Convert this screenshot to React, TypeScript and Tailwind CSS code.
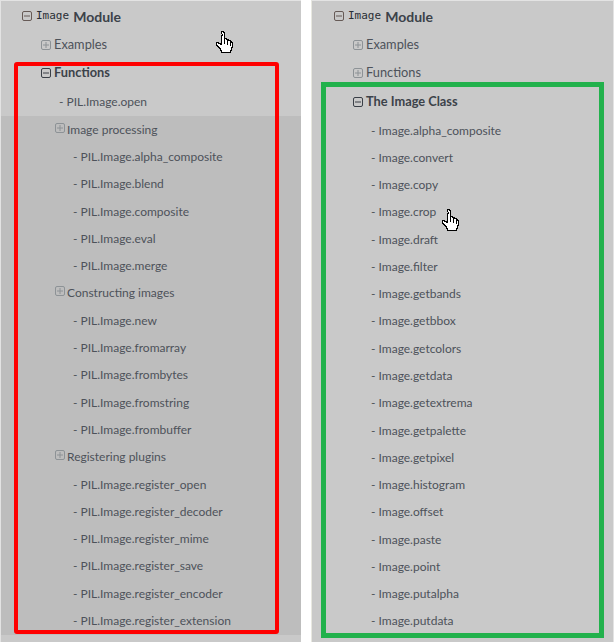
function Box({ kind, tone, raised }: { kind: "plus" | "minus"; tone: "dark" | "light" | "orange"; raised?: boolean }) {
  const c = tone === "dark" ? "#3a3f47" : tone === "orange" ? "#665a56" : "#8d9296";
  return (
    <svg width="10" height="10" viewBox="0 0 10 10" className={raised ? "shrink-0 -mt-[4px]" : "shrink-0"}>
      <rect x="0.5" y="0.5" width="9" height="9" rx="1.5" fill="none" stroke={c} />
      <path d="M2 5H8" stroke={c} />
      {kind === "plus" && <path d="M5 2V8" stroke={c} />}
    </svg>
  );
}

function Hand({ className }: { className: string }) {
  return (
    <svg width="18" height="22" viewBox="0 0 18 22" className={className} shapeRendering="crispEdges">
      <path
        d="M5.5.5h2v1h1v6h2v1h2v1h2v1h1v1h1v5h-1v3h-1v2h-9v-2h-1v-2h-1v-1h-1v-1h-1v-1h-1v-3h2v1h2v1h1v-9h1z"
        fill="#fff"
        stroke="#000"
      />
      <path d="M8.5 8v5M11.5 9v5M14.5 11v4" stroke="#000" fill="none" />
    </svg>
  );
}

type Row = { t: string; h: number; ml: number; b?: "plus" | "minus"; bold?: boolean; open?: boolean; small?: boolean; raised?: boolean };

function R({ r }: { r: Row }) {
  return (
    <div className="flex items-center" style={{ height: r.h, paddingLeft: r.ml }}>
      {r.b && (
        <span className={r.raised ? "mr-[2px] flex" : "mr-[3px] flex"}>
          <Box kind={r.b} tone={r.open ? "dark" : "light"} raised={r.raised} />
        </span>
      )}
      <span className={r.bold ? "font-bold text-[#3c424a]" : r.small ? "text-[12px] text-[#4d525a]" : "text-[#4d525a]"}>{r.t}</span>
    </div>
  );
}

function Title() {
  return (
    <div className="flex h-[28px] items-center">
      <span className="mr-[4px] flex">
        <Box kind="minus" tone="orange" />
      </span>
      <span className="text-[11px] text-[#2a2f36] [font-family:'DejaVu_Sans_Mono',monospace]">Image</span>
      <span className="ml-[4px] text-[14px] font-bold text-[#3c424a]">Module</span>
    </div>
  );
}

const leaf = (t: string): Row => ({ t, h: 27.3, ml: 72, small: true });
const group = (t: string): Row => ({ t, h: 27.3, ml: 54, b: "plus", small: true, raised: true });

const leftLower: Row[] = [
  group("Image processing"),
  ...["alpha_composite", "blend", "composite", "eval", "merge"].map((s) => leaf(`- PIL.Image.${s}`)),
  group("Constructing images"),
  ...["new", "fromarray", "frombytes", "fromstring", "frombuffer"].map((s) => leaf(`- PIL.Image.${s}`)),
  group("Registering plugins"),
  ...["register_open", "register_decoder", "register_mime", "register_save", "register_encoder", "register_extension"].map((s) =>
    leaf(`- PIL.Image.${s}`)
  ),
];

const methods = [
  "alpha_composite", "convert", "copy", "crop", "draft", "filter", "getbands", "getbbox", "getcolors", "getdata",
  "getextrema", "getpalette", "getpixel", "histogram", "offset", "paste", "point", "putalpha", "putdata",
];

export default function App() {
  return (
    <div className="relative flex h-[642px] w-[616px] overflow-hidden bg-white text-[12.8px] [font-family:Lato,sans-serif]">
      <div className="relative h-[642px] w-[301px] border-l border-t border-[#e3e3e3] bg-[#c9c9c9]">
        <div className="pl-[21px] pt-[1px]">
          <Title />
        </div>
        <div className="pt-[1px]">
          <R r={{ t: "Examples", h: 28, ml: 40, b: "plus" }} />
          <R r={{ t: "Functions", h: 28, ml: 40, b: "minus", bold: true, open: true }} />
          <R r={{ t: "- PIL.Image.open", h: 29, ml: 58, small: true }} />
        </div>
        <div className="h-[519px] bg-[#bdbdbd]">
          {leftLower.map((r) => (
            <R key={r.t} r={r} />
          ))}
        </div>
        <div className="absolute left-[13px] top-[61px] h-[572px] w-[265px] rounded-[3px] border-4 border-[#ff0000]" />
        <Hand className="absolute left-[215px] top-[30px]" />
      </div>
      <div className="relative ml-[10px] h-[642px] w-[303px] border-x border-t border-l-[#e8e8e0] border-r-[#e3e3e3] border-t-[#e3e3e3] bg-[#c9c9c9]">
        <div className="pl-[22px] pt-[1px]">
          <Title />
        </div>
        <div className="pt-[1px]">
          <R r={{ t: "Examples", h: 28, ml: 41, b: "plus" }} />
          <R r={{ t: "Functions", h: 28, ml: 41, b: "plus" }} />
          <R r={{ t: "The Image Class", h: 29, ml: 41, b: "minus", bold: true, open: true }} />
        </div>
        <div className="pt-[1px]">
          {methods.map((m) => (
            <R key={m} r={{ t: `- Image.${m}`, h: 27.28, ml: 59, small: true }} />
          ))}
        </div>
        <div className="absolute left-[9px] top-[81px] h-[556px] w-[283px] border-[5px] border-[#22b14c]" />
        <Hand className="absolute left-[130px] top-[208px]" />
      </div>
    </div>
  );
}
